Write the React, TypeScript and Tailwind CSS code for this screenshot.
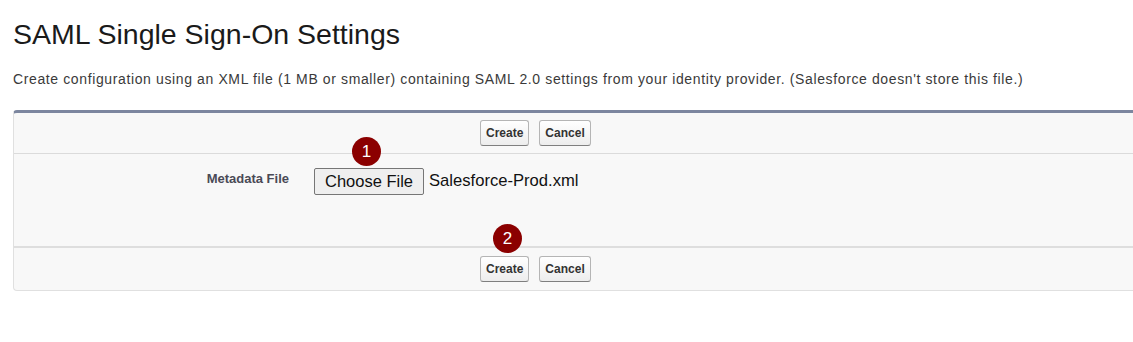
import React from "react";

function SfButton({ label }: { label: string }) {
  return (
    <button className="h-[26px] px-[5px] rounded-[3px] border border-[#b5b5b5] border-b-[#7f7f7f] bg-gradient-to-b from-white to-[#ededed] text-[12px] font-bold text-[#333] leading-none">
      {label}
    </button>
  );
}

function Badge({ n }: { n: number }) {
  return (
    <span className="absolute flex items-center justify-center w-[29px] h-[29px] rounded-full bg-[#8b0000] text-white text-[17px] leading-none">
      {n}
    </span>
  );
}

export default function App() {
  return (
    <div
      className="w-[1133px] h-[342px] overflow-hidden bg-white text-black"
      style={{ fontFamily: '"Liberation Sans", Arial, sans-serif' }}
    >
      <h1 className="pl-[13px] pt-[18px] text-[28.5px] leading-[32px] font-normal text-[#1a1a1a]">
        SAML Single Sign-On Settings
      </h1>
      <p className="pl-[13px] mt-[21px] text-[14px] leading-[17px] tracking-[0.62px] text-[#3a3a3a]">
        Create configuration using an XML file (1 MB or smaller) containing SAML 2.0 settings from your identity provider. (Salesforce doesn't store this file.)
      </p>

      {/* page block */}
      <div className="ml-[13px] mt-[22px] w-[1140px] rounded-[4px] border-t-[3px] border-t-[#7c869f] border-l border-b border-[#e0e0e0] bg-[#f8f8f8]">
        <div className="flex h-[41px] items-center gap-[10px] pl-[466px] border-b border-[#dbdbdb]">
          <SfButton label="Create" />
          <SfButton label="Cancel" />
        </div>

        <div className="relative flex h-[94px] items-start border-b-2 border-[#dedede]">
          <div className="w-[275px] pt-[15px] text-right text-[13px] font-bold text-[#4a4a56]">
            Metadata File
          </div>
          <div className="flex items-center pl-[25px] pt-[14px]">
            <button className="h-[27px] px-[10px] rounded-[2px] border border-[#767676] bg-[#efefef] text-[16.5px] text-[#111] leading-none">
              Choose File
            </button>
            <span className="ml-[5px] text-[16.6px] text-[#111]">Salesforce-Prod.xml</span>
          </div>
          <div className="absolute left-[338px] top-[-17px]">
            <Badge n={1} />
          </div>
          <div className="absolute left-[479px] top-[70px]">
            <Badge n={2} />
          </div>
        </div>

        <div className="flex h-[42px] items-center gap-[10px] pl-[466px]">
          <SfButton label="Create" />
          <SfButton label="Cancel" />
        </div>
      </div>
    </div>
  );
}
